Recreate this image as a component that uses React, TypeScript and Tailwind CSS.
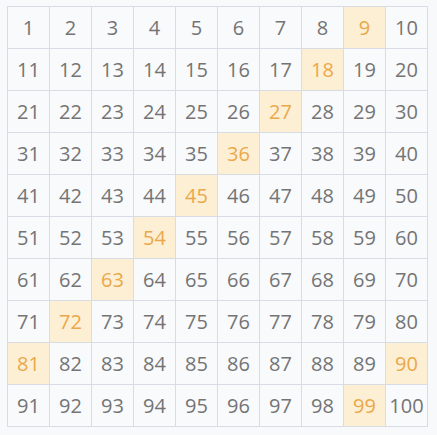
import React from "react"

const numbers = Array.from({ length: 100 }, (_, i) => i + 1)

function App() {
  return (
    <div className="h-screen w-screen bg-[#f8f9fb] pt-[6px] pl-[7px] font-['Open_Sans',sans-serif]">
      <div className="grid w-fit grid-cols-[repeat(10,41px)] gap-px bg-[#d8dde5] p-px">
        {numbers.map((n) => {
          const hit = n % 9 === 0
          return (
            <div
              key={n}
              className={
                hit
                  ? "flex h-[41px] items-center justify-center bg-[#fdefd4] text-[20px] text-[#eba84a]"
                  : "flex h-[41px] items-center justify-center bg-[#f9fafc] text-[20px] text-[#747474]"
              }
            >
              {n}
            </div>
          )
        })}
      </div>
    </div>
  )
}

export default App
